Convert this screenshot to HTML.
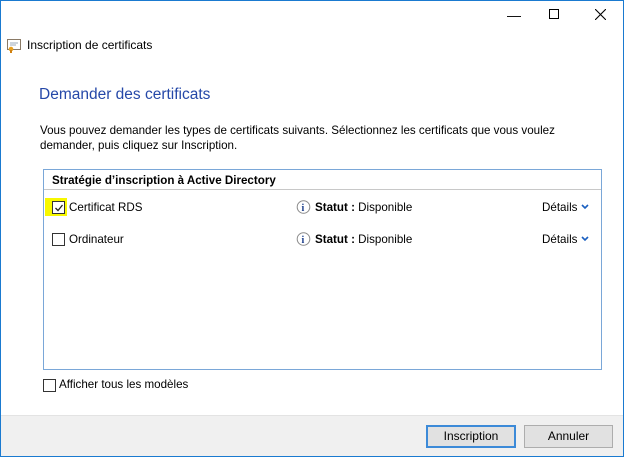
<!DOCTYPE html>
<html><head><meta charset="utf-8"><style>
*{margin:0;padding:0;box-sizing:border-box}
body{width:624px;height:457px;overflow:hidden;background:#fff;font-family:"Liberation Sans",sans-serif;font-size:12px;color:#000;position:relative}
.win{position:absolute;left:0;top:0;width:624px;height:457px}
.bord{position:absolute;left:0;top:0;width:624px;height:457px;border:1px solid #1a7ad0;pointer-events:none}
.abs{position:absolute;white-space:nowrap}
.footer{position:absolute;left:1px;right:1px;top:415px;bottom:1px;background:#f0f0f0;border-top:1px solid #e3e3e3}
.btn{position:absolute;top:425px;height:23px;border:1px solid #adadad;background:#e1e1e1;text-align:center;line-height:21px}
.cb{position:absolute;width:13px;height:13px;border:1px solid #333;background:#fff}
</style></head><body>
<div class="win">
<div class="abs" style="left:507px;top:7px;font-size:14px">&#8212;</div>
<div class="abs" style="left:549px;top:9px;width:10px;height:10px;border:1px solid #000"></div>
<svg class="abs" style="left:595px;top:9px" width="11" height="11"><path d="M0 0L11 11M11 0L0 11" stroke="#000" stroke-width="1.1"/></svg>
<svg class="abs" style="left:7px;top:39px" width="14" height="14"><rect x="0.5" y="0.5" width="13" height="10" fill="#fff" stroke="#8a7a66"/><line x1="3" y1="4" x2="11" y2="4" stroke="#9ab"/><line x1="3" y1="6" x2="9" y2="6" stroke="#9ab"/><circle cx="4" cy="10" r="2.3" fill="#e8a020"/><rect x="3" y="11" width="2" height="3" fill="#d08010"/></svg>
<div class="abs" style="left:27px;top:38px;font-size:12px">Inscription de certificats</div>
<div class="abs" style="left:39px;top:86px;font-size:15.5px;color:#2548a8">Demander des certificats</div>
<div class="abs" style="left:40px;top:123px;line-height:15px;font-size:11.6px">Vous pouvez demander les types de certificats suivants. Sélectionnez les certificats que vous voulez<br>demander, puis cliquez sur Inscription.</div>
<div class="abs" style="left:43px;top:169px;width:559px;height:201px;border:1px solid #7aa7d8"></div>
<div class="abs" style="left:44px;top:189px;width:557px;height:1px;background:#c8c8c8"></div>
<div class="abs" style="left:52px;top:174px;font-weight:bold;font-size:11.6px">Stratégie d’inscription à Active Directory</div>
<div class="abs" style="left:45px;top:198px;width:22px;height:18px;background:#f8f800"></div>
<div class="cb" style="left:52px;top:201px"></div>
<svg class="abs" style="left:53px;top:202px" width="12" height="12"><path d="M2.5 6L5 8.5L9.5 3" stroke="#222" stroke-width="1.3" fill="none"/></svg>
<div class="abs" style="left:69px;top:201px;font-size:11.6px">Certificat RDS</div>
<div class="cb" style="left:52px;top:233px"></div>
<div class="abs" style="left:69px;top:233px;font-size:11.6px">Ordinateur</div>
<svg class="abs" style="left:296px;top:200px" width="16" height="16"><circle cx="7.5" cy="7" r="6.3" fill="#fff" stroke="#8a8a8a"/><text x="5.5" y="11" font-size="10" font-weight="bold" fill="#1a3c8a" font-family="Liberation Serif">i</text></svg>
<svg class="abs" style="left:296px;top:232px" width="16" height="16"><circle cx="7.5" cy="7" r="6.3" fill="#fff" stroke="#8a8a8a"/><text x="5.5" y="11" font-size="10" font-weight="bold" fill="#1a3c8a" font-family="Liberation Serif">i</text></svg>
<div class="abs" style="left:315px;top:201px;font-size:11.6px"><b>Statut :</b> Disponible</div>
<div class="abs" style="left:315px;top:233px;font-size:11.6px"><b>Statut :</b> Disponible</div>
<div class="abs" style="left:542px;top:201px;font-size:11.6px">Détails</div>
<div class="abs" style="left:542px;top:233px;font-size:11.6px">Détails</div>
<svg class="abs" style="left:581px;top:204px" width="8" height="6"><path d="M1 1L4 4L7 1" stroke="#1a5fc0" stroke-width="1.6" fill="none"/></svg>
<svg class="abs" style="left:581px;top:236px" width="8" height="6"><path d="M1 1L4 4L7 1" stroke="#1a5fc0" stroke-width="1.6" fill="none"/></svg>
<div class="cb" style="left:43px;top:379px"></div>
<div class="abs" style="left:59px;top:378px;font-size:11.6px">Afficher tous les modèles</div>
<div class="footer"></div>
<div class="btn" style="left:426px;width:90px;border:2px solid #3c8ad8;line-height:19px">Inscription</div>
<div class="btn" style="left:524px;width:89px">Annuler</div>
</div>
<div class="bord"></div>
</body></html>
